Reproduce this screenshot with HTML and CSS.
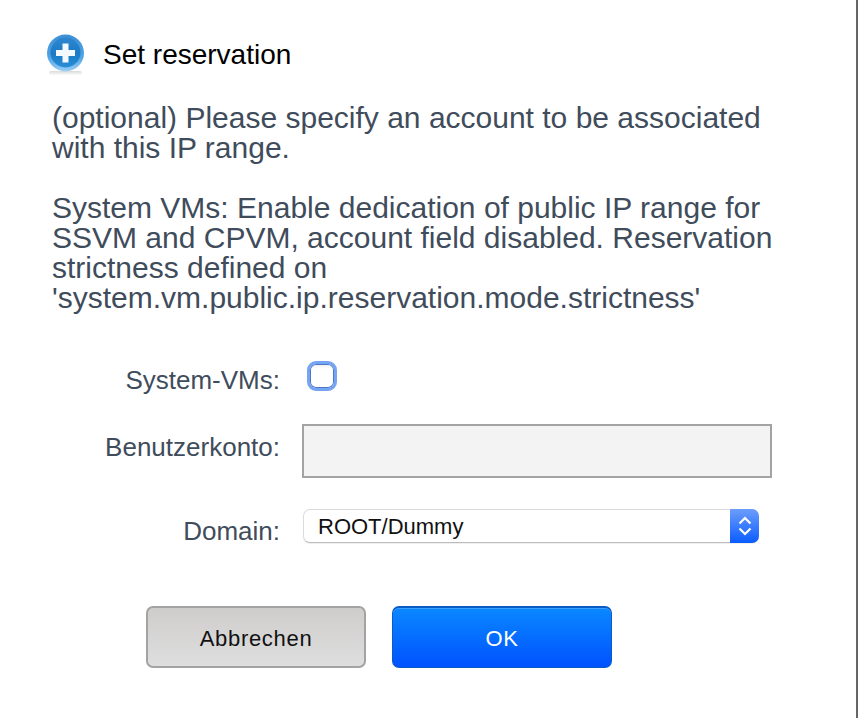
FILE: index.html
```html
<!DOCTYPE html>
<html lang="en">
<head>
    <meta charset="UTF-8">
    <title>Set reservation</title>
    <link rel="stylesheet" href="styles.css">
</head>
<body>
    <div class="dialog">
        <div class="title-bar">
            <svg class="title-icon" width="40" height="44" viewBox="0 0 40 44">
                <defs>
                    <linearGradient id="ring" x1="0" y1="0" x2="0" y2="1">
                        <stop offset="0" stop-color="#3d8fd4"/>
                        <stop offset="0.6" stop-color="#4ea3e4"/>
                        <stop offset="1" stop-color="#9ccff4"/>
                    </linearGradient>
                    <linearGradient id="disc" x1="0" y1="0" x2="0" y2="1">
                        <stop offset="0" stop-color="#2f86cf"/>
                        <stop offset="0.55" stop-color="#1a7ac6"/>
                        <stop offset="1" stop-color="#2a8ed8"/>
                    </linearGradient>
                    <linearGradient id="shade" x1="0" y1="0" x2="0" y2="1">
                        <stop offset="0" stop-color="#d8dadc"/>
                        <stop offset="1" stop-color="#fbfbfb"/>
                    </linearGradient>
                </defs>
                <rect x="3" y="38" width="33" height="4" rx="2" fill="url(#shade)"/>
                <g class="icon-soft">
                    <circle cx="19.500" cy="20" r="18.500" fill="url(#ring)"/>
                    <circle cx="19.500" cy="19.500" r="15" fill="url(#disc)"/>
                    <path d="M16.500 10.500h6v6.500h6.500v6h-6.500v6.500h-6v-6.500H10v-6h6.500z" fill="#f4f9fd"/>
                </g>
            </svg>
            <h1 class="title">Set reservation</h1>
        </div>

        <div class="desc">
            <p>(optional) Please specify an account to be associated with this IP range.</p>
            <p>System VMs: Enable dedication of public IP range for SSVM and CPVM, account field disabled. Reservation strictness defined on 'system.vm.public.ip.reservation.mode.strictness'</p>
        </div>

        <div class="form">
            <div class="row row-check">
                <label class="field-label">System-VMs:</label>
                <span class="checkbox"></span>
            </div>
            <div class="row row-input">
                <label class="field-label">Benutzerkonto:</label>
                <div class="text-input"></div>
            </div>
            <div class="row row-select">
                <label class="field-label">Domain:</label>
                <div class="select">
                    <span class="select-value">ROOT/Dummy</span>
                    <span class="select-arrows">
                        <svg width="14" height="20" viewBox="0 0 14 20">
                            <path d="M1.500 7.500L7 2l5.500 5.500M1.500 12.500L7 18l5.500-5.500" fill="none" stroke="#fff" stroke-width="2.200"/>
                        </svg>
                    </span>
                </div>
            </div>
        </div>

        <div class="buttons">
            <button class="btn btn-cancel">Abbrechen</button>
            <button class="btn btn-ok">OK</button>
        </div>
    </div>
</body>
</html>
```

FILE: styles.css
```css
html, body {
    height: 100%;
}
body {
    margin: 0;
    background-color: #fff;
    font-family: "Liberation Sans", Arial, sans-serif;
    overflow: hidden;
}
.dialog {
    box-sizing: border-box;
    width: 858px;
    height: 718px;
    padding: 33px 0 0 46px;
    border-right: 2px solid #666;
}
.title-bar {
    display: flex;
    align-items: flex-start;
    height: 44px;
}
.title-icon {
    flex: none;
    margin-right: 17px;
}
.icon-soft {
    filter: blur(0.5px);
}
.title {
    margin: 4px 0 0;
    font-size: 28px;
    line-height: 36px;
    font-weight: normal;
    color: #000;
}
.desc {
    width: 730px;
    margin: 26px 0 0 6px;
    font-size: 30px;
    line-height: 30px;
    color: #3f4c5b;
}
.desc p {
    margin: 0 0 30px;
}
.form {
    margin-top: 50px;
}
.row {
    display: flex;
    align-items: center;
}
.field-label {
    flex: none;
    width: 234px;
    margin-right: 22px;
    text-align: right;
    font-size: 26px;
    line-height: 28px;
    color: #3f4c5b;
}
.row-check {
    height: 30px;
}
.row-check .field-label {
    margin-top: 3px;
}
.checkbox {
    box-sizing: border-box;
    width: 30px;
    height: 30px;
    margin-left: 5px;
    margin-top: -5px;
    border: 3px solid #74a4f2;
    border-radius: 9px;
    background: linear-gradient(#ececec, #fff 20%);
    box-shadow: inset 0 0 0 1px #4a78c8;
}
.row-input {
    margin-top: 31px;
}
.row-input .field-label {
    margin-top: -9px;
}
.text-input {
    box-sizing: border-box;
    width: 470px;
    height: 54px;
    border: 2px solid #a3a3a3;
    background-color: #f3f3f3;
}
.row-select {
    align-items: flex-start;
    margin-top: 31px;
}
.row-select .field-label {
    margin-top: 8px;
}
.select {
    box-sizing: border-box;
    display: flex;
    justify-content: space-between;
    width: 456px;
    height: 34px;
    margin-left: 1px;
    border: 1px solid #dcdcdc;
    border-bottom: 1px solid #bdbdbd;
    border-right: none;
    border-radius: 7px;
    background-color: #fff;
    box-shadow: 0 1px 1px #eee;
}
.select-value {
    padding-left: 14px;
    font-size: 22px;
    line-height: 34px;
    color: #111;
}
.select-arrows {
    display: flex;
    align-items: center;
    justify-content: center;
    width: 29px;
    margin: -1px 0;
    border-radius: 0 7px 7px 0;
    background: linear-gradient(#6c9dfb, #0a5cff);
}
.buttons {
    display: flex;
    gap: 26px;
    margin: 61px 0 0 100px;
}
.btn {
    box-sizing: border-box;
    width: 220px;
    height: 62px;
    padding-top: 4px;
    border-radius: 7px;
    font-family: "Liberation Sans", Arial, sans-serif;
    font-size: 22px;
    letter-spacing: 0.7px;
    cursor: pointer;
}
.btn-cancel {
    border: 2px solid #a3a3a3;
    color: #111;
    background: linear-gradient(#cfcdcc, #dedede);
}
.btn-ok {
    border: 1px solid #0a5cc4;
    border-top-width: 2px;
    color: #fff;
    background: linear-gradient(#0a88ff, #0052ff);
    box-shadow: inset 0 1px 0 rgba(255, 255, 255, 0.2);
}
```
